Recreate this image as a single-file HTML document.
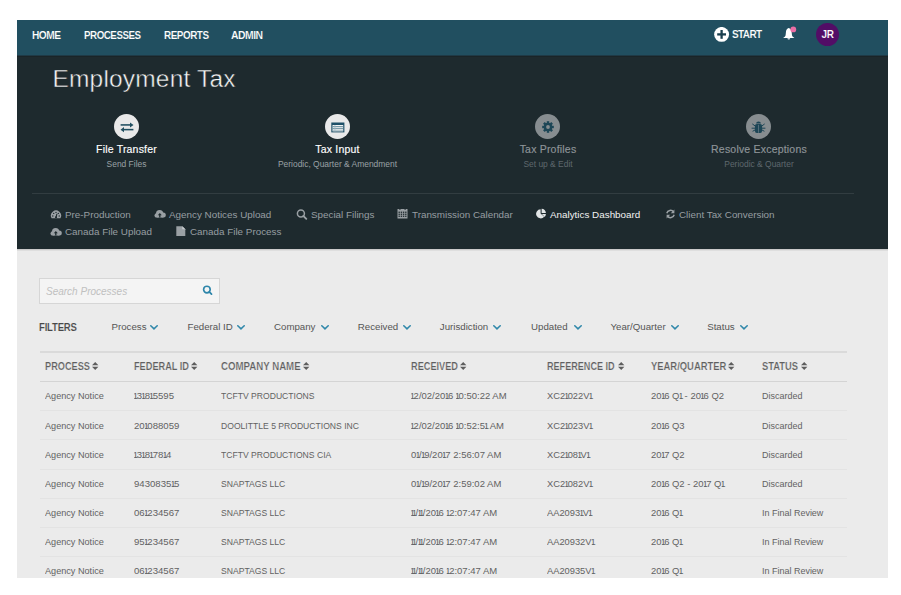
<!DOCTYPE html>
<html><head><meta charset="utf-8">
<style>
html,body{margin:0;padding:0;background:#fff;width:901px;height:595px;overflow:hidden;font-family:"Liberation Sans",sans-serif;}
.a{position:absolute;white-space:nowrap;line-height:1;}
#nav{position:absolute;left:17px;top:20px;width:871px;height:35px;background:#214f60;}
#hdr{position:absolute;left:17px;top:55px;width:871px;height:194px;background:#1e2a2e;}
#gray{position:absolute;left:17px;top:249px;width:871px;height:329px;background:#ebebeb;}
.nv{font-weight:700;font-size:10.4px;letter-spacing:-0.5px;color:#fff;top:30.8px;transform-origin:0 0;-webkit-text-stroke:0.15px #214f60;}
.circ{position:absolute;width:25px;height:25px;border-radius:50%;}
.ttl{font-size:10.5px;font-weight:400;letter-spacing:0.2px;color:#fff;top:144.1px;-webkit-text-stroke:0.15px currentColor;text-align:center;width:200px;}
.sub{font-size:8.45px;color:#9aa1a5;top:160.4px;text-align:center;width:200px;}
.ql{font-size:9.85px;color:#979ea2;}
.fl{font-size:9.7px;color:#555;top:322.3px;}
.chev{position:absolute;top:324px;}
.th{font-size:10.5px;font-weight:700;color:#5f5f5f;-webkit-text-stroke:0.2px #ebebeb;top:360.9px;letter-spacing:0px;transform:scaleX(0.875);transform-origin:0 0;}
.td{font-size:9.8px;color:#626262;transform-origin:0 0;}
.one{letter-spacing:-2.75px;position:relative;left:-1.2px;clip-path:inset(-4px -6px -4px 1.35px);}
.hl{position:absolute;left:39.5px;width:807px;height:1px;background:#e3e3e3;}
</style></head><body>
<div id="nav"></div>
<div id="hdr"></div>
<div id="gray"></div>
<div class="a" style="left:17px;top:55px;width:871px;height:1px;background:#1f3a46"></div>
<div class="a" style="left:17px;top:56px;width:871px;height:1px;background:#1a2427"></div>
<div class="a" style="left:17px;top:249px;width:871px;height:1px;background:#cbcbcb"></div><div class="a" style="left:17px;top:250px;width:871px;height:1px;background:#dedede"></div>

<!-- nav items -->
<div class="a nv" style="left:32px;transform:scaleX(0.98)">HOME</div>
<div class="a nv" style="left:84px;transform:scaleX(0.94)">PROCESSES</div>
<div class="a nv" style="left:163.7px;transform:scaleX(0.953)">REPORTS</div>
<div class="a nv" style="left:231px">ADMIN</div>

<svg class="a" style="left:714px;top:26.8px" width="16" height="16" viewBox="0 0 16 16">
  <circle cx="7.6" cy="7.4" r="7.45" fill="#fff"/>
  <rect x="6.45" y="3" width="2.3" height="8.8" fill="#1a3f4e"/>
  <rect x="3.2" y="6.25" width="8.8" height="2.3" fill="#1a3f4e"/>
</svg>
<div class="a nv" style="left:732px;font-size:10px;letter-spacing:-0.6px;top:29.9px">START</div>
<svg class="a" style="left:781px;top:25px" width="18" height="17" viewBox="0 0 18 17">
  <path d="M7.7 2.9 C6.2 3.3 5.2 4.6 5 6.5 L4.6 10.2 C4.4 11.2 3.4 12.1 2.2 12.9 L13.4 12.9 C12.2 12.1 11.2 11.2 11 10.2 L10.6 6.5 C10.4 4.6 9.2 3.3 7.7 2.9 Z" fill="#fff"/>
  <path d="M6.4 13.2 A1.4 1.4 0 0 0 9.2 13.2 Z" fill="#fff"/>
  <circle cx="12.3" cy="4.4" r="2.9" fill="#ea6ea5"/>
</svg>
<div class="circ" style="left:816.3px;top:22.8px;width:23px;height:23px;background:#520d66"></div>
<div class="a" style="left:821.6px;top:30.2px;font-size:10px;font-weight:700;color:#fff;letter-spacing:-0.5px;-webkit-text-stroke:0.15px #520d66">JR</div>

<!-- title -->
<div class="a" style="left:52.5px;top:66.8px;font-size:24.5px;color:#f4f5f5;letter-spacing:0.18px;-webkit-text-stroke:0.45px #1e2a2e">Employment Tax</div>

<!-- 4 big items -->
<div class="circ" style="left:114px;top:113.8px;background:#e9e9e9"></div>
<svg class="a" style="left:118.5px;top:118.3px" width="16" height="16" viewBox="0 0 16 16">
  <rect x="1.6" y="6.15" width="10" height="1.55" fill="#214f60"/>
  <path d="M11 4.4 L14.5 6.95 L11 9.5 Z" fill="#214f60"/>
  <rect x="4.4" y="10.85" width="10" height="1.55" fill="#214f60"/>
  <path d="M5 9.1 L1.5 11.65 L5 14.2 Z" fill="#214f60"/>
</svg>
<div class="a ttl" style="left:26.5px">File Transfer</div>
<div class="a sub" style="left:26.5px">Send Files</div>

<div class="circ" style="left:325px;top:113.8px;background:#e9e9e9"></div>
<svg class="a" style="left:329.5px;top:118.8px" width="16" height="16" viewBox="0 0 16 16">
  <rect x="1.3" y="3.5" width="13.1" height="9.9" fill="#1e5068"/>
  <rect x="2.5" y="6" width="10.7" height="6.4" fill="#f4f4f4"/>
  <rect x="2.5" y="7.2" width="10.7" height="1" fill="#5f8798"/>
  <rect x="2.5" y="9.2" width="10.7" height="1" fill="#5f8798"/>
  <rect x="2.5" y="11.2" width="10.7" height="0.6" fill="#8aa8b4"/>
  <rect x="4.6" y="6" width="0.7" height="6.4" fill="#9fb7c0"/>
</svg>
<div class="a ttl" style="left:237.5px">Tax Input</div>
<div class="a sub" style="left:237.5px">Periodic, Quarter &amp; Amendment</div>

<div class="circ" style="left:535px;top:113.8px;background:#878d90"></div>
<svg class="a" style="left:539.9px;top:118.9px" width="16" height="16" viewBox="0 0 16 16">
  <g fill="#1d4656">
  <circle cx="8" cy="8" r="4.3"/>
  <rect x="6.8" y="2.2" width="2.4" height="11.6"/>
  <rect x="6.8" y="2.2" width="2.4" height="11.6" transform="rotate(45 8 8)"/>
  <rect x="6.8" y="2.2" width="2.4" height="11.6" transform="rotate(90 8 8)"/>
  <rect x="6.8" y="2.2" width="2.4" height="11.6" transform="rotate(135 8 8)"/>
  </g>
  <circle cx="8" cy="8" r="1.9" fill="#878d90"/>
</svg>
<div class="a ttl" style="left:448px;color:#8e9599">Tax Profiles</div>
<div class="a sub" style="left:448px;color:#5f686d">Set up &amp; Edit</div>

<div class="circ" style="left:746px;top:113.8px;background:#878d90"></div>
<svg class="a" style="left:750.3px;top:119.2px" width="17" height="16" viewBox="0 0 17 16">
  <g fill="#1d4656">
  <path d="M6.1 4.4 A2.25 1.8 0 0 1 10.9 4.4 Z"/>
  <rect x="4.9" y="5.1" width="7.2" height="8.8" rx="2"/>
  </g>
  <path d="M2.3 4.9 L5.2 7 M1.6 9.2 H5 M2.6 12.3 L5.2 10.9 M14.7 4.9 L11.8 7 M15.4 9.2 H12 M14.4 12.3 L11.8 10.9" stroke="#1d4656" stroke-width="1"/>
  <rect x="8.2" y="5.8" width="0.7" height="8" fill="#6b7f88"/>
</svg>
<div class="a ttl" style="left:659px;color:#8e9599">Resolve Exceptions</div>
<div class="a sub" style="left:659px;color:#5f686d">Periodic &amp; Quarter</div>

<!-- separator -->
<div class="a" style="left:32px;top:193px;width:822px;height:1px;background:#323d41"></div>

<!-- quick links -->
<div class="a ql" style="left:65px;top:209.6px">Pre-Production</div>
<div class="a ql" style="left:169px;top:209.6px">Agency Notices Upload</div>
<div class="a ql" style="left:311px;top:209.6px">Special Filings</div>
<div class="a ql" style="left:412px;top:209.6px">Transmission Calendar</div>
<div class="a ql" style="left:550px;top:209.6px;color:#f2f2f2">Analytics Dashboard</div>
<div class="a ql" style="left:679px;top:209.6px">Client Tax Conversion</div>
<div class="a ql" style="left:65px;top:226.6px">Canada File Upload</div>
<div class="a ql" style="left:190px;top:226.6px">Canada File Process</div>
<!-- ql icons -->
<svg class="a" style="left:49.5px;top:209.6px" width="12" height="10" viewBox="0 0 12 10">
  <path d="M1.6 8.2 A5.1 5.1 0 1 1 10.4 8.2 Z" fill="#9aa0a4"/>
  <g fill="#1e2a2e"><circle cx="2.8" cy="6" r="0.7"/><circle cx="9.2" cy="6" r="0.7"/><circle cx="3.7" cy="3.4" r="0.7"/><circle cx="8.3" cy="3.4" r="0.7"/><circle cx="6" cy="2.4" r="0.7"/></g>
  <path d="M6 7.6 L6.9 3.8" stroke="#1e2a2e" stroke-width="1.1"/>
  <circle cx="6" cy="7.3" r="1" fill="#1e2a2e"/>
</svg>
<svg class="a" style="left:49.7px;top:226.6px" width="12" height="10" viewBox="0 0 12 10">
  <g fill="#9aa0a4"><circle cx="2.7" cy="6.4" r="2.2"/><circle cx="5.6" cy="4.5" r="3.6"/><circle cx="9.3" cy="6.1" r="2.5"/><rect x="2.7" y="5" width="6.6" height="3.6"/></g>
  <path d="M5.8 8.6 V5.2" stroke="#1e2a2e" stroke-width="1.3"/><path d="M3.8 6.2 L5.8 3.9 L7.8 6.2 Z" fill="#1e2a2e"/>
</svg>
<svg class="a" style="left:153.8px;top:209.2px" width="12" height="10" viewBox="0 0 12 10">
  <g fill="#9aa0a4"><circle cx="2.7" cy="6.4" r="2.2"/><circle cx="5.6" cy="4.5" r="3.6"/><circle cx="9.3" cy="6.1" r="2.5"/><rect x="2.7" y="5" width="6.6" height="3.6"/></g>
  <path d="M5.8 8.6 V5.2" stroke="#1e2a2e" stroke-width="1.3"/><path d="M3.8 6.2 L5.8 3.9 L7.8 6.2 Z" fill="#1e2a2e"/>
</svg>
<svg class="a" style="left:176px;top:226px" width="10" height="11" viewBox="0 0 10 11">
  <path d="M0.3 0.3 H6.3 L9.3 3.3 V10 H0.3 Z" fill="#9aa0a4"/>
  <path d="M6.3 0.3 V3.3 H9.3" fill="#c9cdd0"/>
</svg>
<svg class="a" style="left:296px;top:209px" width="12" height="11" viewBox="0 0 12 11">
  <circle cx="4.9" cy="4.5" r="3.5" stroke="#9aa0a4" stroke-width="1.5" fill="none"/>
  <path d="M7.4 7 L10.3 9.8" stroke="#9aa0a4" stroke-width="1.8" stroke-linecap="round"/>
</svg>
<svg class="a" style="left:397.1px;top:207.9px" width="11" height="11" viewBox="0 0 11 11">
  <rect x="0.5" y="1" width="10" height="9.5" fill="#9aa0a4"/>
  <g fill="#1e2a2e">
   <rect x="1.5" y="3.6" width="1.4" height="1.3"/><rect x="3.7" y="3.6" width="1.4" height="1.3"/><rect x="5.9" y="3.6" width="1.4" height="1.3"/><rect x="8.1" y="3.6" width="1.4" height="1.3"/>
   <rect x="1.5" y="5.6" width="1.4" height="1.3"/><rect x="3.7" y="5.6" width="1.4" height="1.3"/><rect x="5.9" y="5.6" width="1.4" height="1.3"/><rect x="8.1" y="5.6" width="1.4" height="1.3"/>
   <rect x="1.5" y="7.6" width="1.4" height="1.3"/><rect x="3.7" y="7.6" width="1.4" height="1.3"/><rect x="5.9" y="7.6" width="1.4" height="1.3"/><rect x="8.1" y="7.6" width="1.4" height="1.3"/>
   <rect x="2.3" y="0" width="1.2" height="1.8"/><rect x="7.5" y="0" width="1.2" height="1.8"/>
  </g>
</svg>
<svg class="a" style="left:535px;top:208.4px" width="12" height="11" viewBox="0 0 12 11">
  <path d="M5.6 1.2 A4.6 4.6 0 1 0 9.2 8.8 L5.6 5.6 Z" fill="#e2e5e6"/>
  <path d="M6.6 0.7 A4.3 4.3 0 0 1 10.9 5 H6.6 Z" fill="#e2e5e6"/>
  <path d="M6.9 6 H10.9 A4.3 4.3 0 0 1 9.7 8.9 Z" fill="#e2e5e6"/>
</svg>
<svg class="a" style="left:665px;top:209px" width="11" height="10" viewBox="0 0 11 10">
  <path d="M1.8 4.2 A3.8 3.8 0 0 1 8.6 3" stroke="#9aa0a4" stroke-width="1.5" fill="none"/>
  <path d="M9.4 0.6 V4.2 H5.8 Z" fill="#9aa0a4"/>
  <path d="M9.2 5.8 A3.8 3.8 0 0 1 2.4 7" stroke="#9aa0a4" stroke-width="1.5" fill="none"/>
  <path d="M1.6 9.4 V5.8 H5.2 Z" fill="#9aa0a4"/>
</svg>
<!-- filter chevrons -->
<svg class="a" style="left:150.3px;top:324.5px" width="8" height="5" viewBox="0 0 8 5"><path d="M0.8 0.8 L4 3.9 L7.2 0.8" stroke="#3088aa" stroke-width="1.55" fill="none" stroke-linecap="round"/></svg>
<svg class="a" style="left:237.2px;top:324.5px" width="8" height="5" viewBox="0 0 8 5"><path d="M0.8 0.8 L4 3.9 L7.2 0.8" stroke="#3088aa" stroke-width="1.55" fill="none" stroke-linecap="round"/></svg>
<svg class="a" style="left:321px;top:324.5px" width="8" height="5" viewBox="0 0 8 5"><path d="M0.8 0.8 L4 3.9 L7.2 0.8" stroke="#3088aa" stroke-width="1.55" fill="none" stroke-linecap="round"/></svg>
<svg class="a" style="left:402.5px;top:324.5px" width="8" height="5" viewBox="0 0 8 5"><path d="M0.8 0.8 L4 3.9 L7.2 0.8" stroke="#3088aa" stroke-width="1.55" fill="none" stroke-linecap="round"/></svg>
<svg class="a" style="left:493px;top:324.5px" width="8" height="5" viewBox="0 0 8 5"><path d="M0.8 0.8 L4 3.9 L7.2 0.8" stroke="#3088aa" stroke-width="1.55" fill="none" stroke-linecap="round"/></svg>
<svg class="a" style="left:573.5px;top:324.5px" width="8" height="5" viewBox="0 0 8 5"><path d="M0.8 0.8 L4 3.9 L7.2 0.8" stroke="#3088aa" stroke-width="1.55" fill="none" stroke-linecap="round"/></svg>
<svg class="a" style="left:671px;top:324.5px" width="8" height="5" viewBox="0 0 8 5"><path d="M0.8 0.8 L4 3.9 L7.2 0.8" stroke="#3088aa" stroke-width="1.55" fill="none" stroke-linecap="round"/></svg>
<svg class="a" style="left:739.5px;top:324.5px" width="8" height="5" viewBox="0 0 8 5"><path d="M0.8 0.8 L4 3.9 L7.2 0.8" stroke="#3088aa" stroke-width="1.55" fill="none" stroke-linecap="round"/></svg>

<!-- search -->
<div class="a" style="left:39px;top:278px;width:179px;height:24px;border:1px solid #d6d6d6;background:#f4f4f4"></div>
<div class="a" style="left:46px;top:286.5px;font-size:10px;font-style:italic;color:#c0c0c0">Search Processes</div>
<svg class="a" style="left:202px;top:285.1px" width="12" height="11" viewBox="0 0 12 11">
  <circle cx="4.9" cy="4.5" r="3.3" stroke="#2e86aa" stroke-width="1.65" fill="none"/>
  <path d="M7.3 6.9 L9.5 9.1" stroke="#2e86aa" stroke-width="1.8" stroke-linecap="round"/>
</svg>

<!-- filters -->
<div class="a fl" style="left:39.3px;top:321.6px;font-size:10.6px;font-weight:700;color:#474747;letter-spacing:-0.2px;transform:scaleX(0.9);transform-origin:0 0;-webkit-text-stroke:0.15px #ebebeb">FILTERS</div>
<div class="a fl" style="left:111.5px">Process</div>
<div class="a fl" style="left:187.5px">Federal ID</div>
<div class="a fl" style="left:274px">Company</div>
<div class="a fl" style="left:357.8px">Received</div>
<div class="a fl" style="left:439.8px">Jurisdiction</div>
<div class="a fl" style="left:531px">Updated</div>
<div class="a fl" style="left:610.5px">Year/Quarter</div>
<div class="a fl" style="left:707.2px">Status</div>

<!-- table -->
<div class="hl" style="top:351px;height:2px;background:#dadada"></div>
<div class="a th" style="left:45.1px;transform:scaleX(0.875)">PROCESS</div>
<div class="a th" style="left:134.2px;transform:scaleX(0.875)">FEDERAL ID</div>
<div class="a th" style="left:221.4px;transform:scaleX(0.92)">COMPANY NAME</div>
<div class="a th" style="left:410.8px;transform:scaleX(0.875)">RECEIVED</div>
<div class="a th" style="left:547.3px;transform:scaleX(0.865)">REFERENCE ID</div>
<div class="a th" style="left:651px;transform:scaleX(0.897)">YEAR/QUARTER</div>
<div class="a th" style="left:762.2px;transform:scaleX(0.89)">STATUS</div>
<svg class="a" style="left:91.8px;top:362px" width="7" height="9" viewBox="0 0 7 9"><path d="M0 3.3 L3.2 0.1 L6.4 3.3 Z M0 4.7 L3.2 8 L6.4 4.7 Z" fill="#5e5e5e"/></svg>
<svg class="a" style="left:191.3px;top:362px" width="7" height="9" viewBox="0 0 7 9"><path d="M0 3.3 L3.2 0.1 L6.4 3.3 Z M0 4.7 L3.2 8 L6.4 4.7 Z" fill="#5e5e5e"/></svg>
<svg class="a" style="left:303.4px;top:362px" width="7" height="9" viewBox="0 0 7 9"><path d="M0 3.3 L3.2 0.1 L6.4 3.3 Z M0 4.7 L3.2 8 L6.4 4.7 Z" fill="#5e5e5e"/></svg>
<svg class="a" style="left:460.4px;top:362px" width="7" height="9" viewBox="0 0 7 9"><path d="M0 3.3 L3.2 0.1 L6.4 3.3 Z M0 4.7 L3.2 8 L6.4 4.7 Z" fill="#5e5e5e"/></svg>
<svg class="a" style="left:617.9px;top:362px" width="7" height="9" viewBox="0 0 7 9"><path d="M0 3.3 L3.2 0.1 L6.4 3.3 Z M0 4.7 L3.2 8 L6.4 4.7 Z" fill="#5e5e5e"/></svg>
<svg class="a" style="left:727.8px;top:362px" width="7" height="9" viewBox="0 0 7 9"><path d="M0 3.3 L3.2 0.1 L6.4 3.3 Z M0 4.7 L3.2 8 L6.4 4.7 Z" fill="#5e5e5e"/></svg>
<svg class="a" style="left:800.6px;top:362px" width="7" height="9" viewBox="0 0 7 9"><path d="M0 3.3 L3.2 0.1 L6.4 3.3 Z M0 4.7 L3.2 8 L6.4 4.7 Z" fill="#5e5e5e"/></svg>
<div class="hl" style="top:381px;background:#d4d4d4"></div>
<div class="a td" style="left:45.1px;top:391.4px;transform:scaleX(0.931)">Agency Notice</div>
<div class="a td" style="left:134.2px;top:391.4px;transform:scaleX(0.98)"><span class="one">1</span>3<span class="one">1</span>8<span class="one">1</span>5595</div>
<div class="a td" style="left:221.4px;top:391.4px;transform:scaleX(0.877)">TCFTV PRODUCTIONS</div>
<div class="a td" style="left:410.8px;top:391.4px;transform:scaleX(0.97)"><span class="one">1</span>2/02/20<span class="one">1</span>6 <span class="one">1</span>0:50:22 AM</div>
<div class="a td" style="left:547.3px;top:391.4px;transform:scaleX(0.95)">XC2<span class="one">1</span>022V<span class="one">1</span></div>
<div class="a td" style="left:651px;top:391.4px;transform:scaleX(0.965)">20<span class="one">1</span>6 Q<span class="one">1</span> - 20<span class="one">1</span>6 Q2</div>
<div class="a td" style="left:762.2px;top:391.4px;transform:scaleX(0.916)">Discarded</div>
<div class="hl" style="top:410.20px"></div>
<div class="a td" style="left:45.1px;top:420.6px;transform:scaleX(0.931)">Agency Notice</div>
<div class="a td" style="left:134.2px;top:420.6px;transform:scaleX(0.98)">20<span class="one">1</span>088059</div>
<div class="a td" style="left:221.4px;top:420.6px;transform:scaleX(0.877)">DOOLITTLE 5 PRODUCTIONS INC</div>
<div class="a td" style="left:410.8px;top:420.6px;transform:scaleX(0.97)"><span class="one">1</span>2/02/20<span class="one">1</span>6 <span class="one">1</span>0:52:5<span class="one">1</span> AM</div>
<div class="a td" style="left:547.3px;top:420.6px;transform:scaleX(0.95)">XC2<span class="one">1</span>023V<span class="one">1</span></div>
<div class="a td" style="left:651px;top:420.6px;transform:scaleX(0.965)">20<span class="one">1</span>6 Q3</div>
<div class="a td" style="left:762.2px;top:420.6px;transform:scaleX(0.916)">Discarded</div>
<div class="hl" style="top:439.35px"></div>
<div class="a td" style="left:45.1px;top:449.7px;transform:scaleX(0.931)">Agency Notice</div>
<div class="a td" style="left:134.2px;top:449.7px;transform:scaleX(0.98)"><span class="one">1</span>3<span class="one">1</span>8<span class="one">1</span>78<span class="one">1</span>4</div>
<div class="a td" style="left:221.4px;top:449.7px;transform:scaleX(0.877)">TCFTV PRODUCTIONS CIA</div>
<div class="a td" style="left:410.8px;top:449.7px;transform:scaleX(0.97)">0<span class="one">1</span>/<span class="one">1</span>9/20<span class="one">1</span>7 2:56:07 AM</div>
<div class="a td" style="left:547.3px;top:449.7px;transform:scaleX(0.95)">XC2<span class="one">1</span>08<span class="one">1</span>V<span class="one">1</span></div>
<div class="a td" style="left:651px;top:449.7px;transform:scaleX(0.965)">20<span class="one">1</span>7 Q2</div>
<div class="a td" style="left:762.2px;top:449.7px;transform:scaleX(0.916)">Discarded</div>
<div class="hl" style="top:468.50px"></div>
<div class="a td" style="left:45.1px;top:478.9px;transform:scaleX(0.931)">Agency Notice</div>
<div class="a td" style="left:134.2px;top:478.9px;transform:scaleX(0.98)">9430835<span class="one">1</span>5</div>
<div class="a td" style="left:221.4px;top:478.9px;transform:scaleX(0.877)">SNAPTAGS LLC</div>
<div class="a td" style="left:410.8px;top:478.9px;transform:scaleX(0.97)">0<span class="one">1</span>/<span class="one">1</span>9/20<span class="one">1</span>7 2:59:02 AM</div>
<div class="a td" style="left:547.3px;top:478.9px;transform:scaleX(0.95)">XC2<span class="one">1</span>082V<span class="one">1</span></div>
<div class="a td" style="left:651px;top:478.9px;transform:scaleX(0.965)">20<span class="one">1</span>6 Q2 - 20<span class="one">1</span>7 Q<span class="one">1</span></div>
<div class="a td" style="left:762.2px;top:478.9px;transform:scaleX(0.916)">Discarded</div>
<div class="hl" style="top:497.65px"></div>
<div class="a td" style="left:45.1px;top:508.0px;transform:scaleX(0.931)">Agency Notice</div>
<div class="a td" style="left:134.2px;top:508.0px;transform:scaleX(0.98)">06<span class="one">1</span>234567</div>
<div class="a td" style="left:221.4px;top:508.0px;transform:scaleX(0.877)">SNAPTAGS LLC</div>
<div class="a td" style="left:410.8px;top:508.0px;transform:scaleX(0.97)"><span class="one">1</span><span class="one">1</span>/<span class="one">1</span><span class="one">1</span>/20<span class="one">1</span>6 <span class="one">1</span>2:07:47 AM</div>
<div class="a td" style="left:547.3px;top:508.0px;transform:scaleX(0.95)">AA2093<span class="one">1</span>V<span class="one">1</span></div>
<div class="a td" style="left:651px;top:508.0px;transform:scaleX(0.965)">20<span class="one">1</span>6 Q<span class="one">1</span></div>
<div class="a td" style="left:762.2px;top:508.0px;transform:scaleX(0.916)">In Final Review</div>
<div class="hl" style="top:526.80px"></div>
<div class="a td" style="left:45.1px;top:537.2px;transform:scaleX(0.931)">Agency Notice</div>
<div class="a td" style="left:134.2px;top:537.2px;transform:scaleX(0.98)">95<span class="one">1</span>234567</div>
<div class="a td" style="left:221.4px;top:537.2px;transform:scaleX(0.877)">SNAPTAGS LLC</div>
<div class="a td" style="left:410.8px;top:537.2px;transform:scaleX(0.97)"><span class="one">1</span><span class="one">1</span>/<span class="one">1</span><span class="one">1</span>/20<span class="one">1</span>6 <span class="one">1</span>2:07:47 AM</div>
<div class="a td" style="left:547.3px;top:537.2px;transform:scaleX(0.95)">AA20932V<span class="one">1</span></div>
<div class="a td" style="left:651px;top:537.2px;transform:scaleX(0.965)">20<span class="one">1</span>6 Q<span class="one">1</span></div>
<div class="a td" style="left:762.2px;top:537.2px;transform:scaleX(0.916)">In Final Review</div>
<div class="hl" style="top:555.95px"></div>
<div class="a td" style="left:45.1px;top:566.3px;transform:scaleX(0.931)">Agency Notice</div>
<div class="a td" style="left:134.2px;top:566.3px;transform:scaleX(0.98)">06<span class="one">1</span>234567</div>
<div class="a td" style="left:221.4px;top:566.3px;transform:scaleX(0.877)">SNAPTAGS LLC</div>
<div class="a td" style="left:410.8px;top:566.3px;transform:scaleX(0.97)"><span class="one">1</span><span class="one">1</span>/<span class="one">1</span><span class="one">1</span>/20<span class="one">1</span>6 <span class="one">1</span>2:07:47 AM</div>
<div class="a td" style="left:547.3px;top:566.3px;transform:scaleX(0.95)">AA20935V<span class="one">1</span></div>
<div class="a td" style="left:651px;top:566.3px;transform:scaleX(0.965)">20<span class="one">1</span>6 Q<span class="one">1</span></div>
<div class="a td" style="left:762.2px;top:566.3px;transform:scaleX(0.916)">In Final Review</div>
</body></html>
